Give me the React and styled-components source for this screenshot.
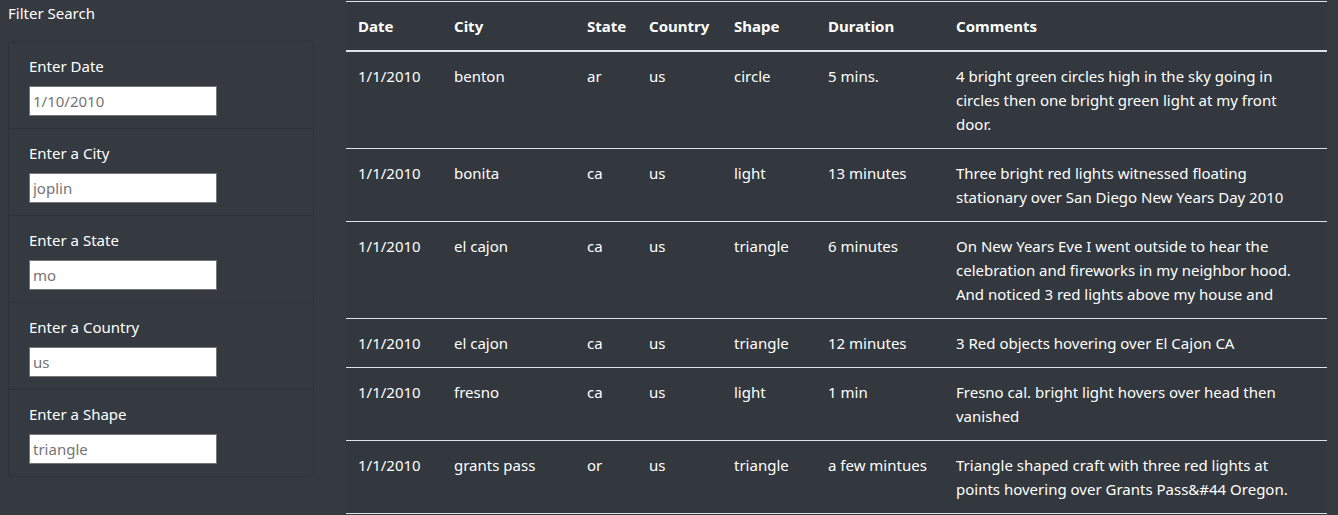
import React from 'react';
import styled, { createGlobalStyle } from 'styled-components';

const GlobalStyle = createGlobalStyle`
    body {
        margin: 0;
        background-color: #343a40;
        color: #fff;
        font-family: "Noto Sans", "Open Sans", sans-serif;
        font-size: 15px;
        line-height: 24px;
    }
`;

const filters = [
    { label: 'Enter Date', placeholder: '1/10/2010' },
    { label: 'Enter a City', placeholder: 'joplin' },
    { label: 'Enter a State', placeholder: 'mo' },
    { label: 'Enter a Country', placeholder: 'us' },
    { label: 'Enter a Shape', placeholder: 'triangle' },
];

const columns = [
    { title: 'Date', width: 96 },
    { title: 'City', width: 133 },
    { title: 'State', width: 62 },
    { title: 'Country', width: 85 },
    { title: 'Shape', width: 94 },
    { title: 'Duration', width: 128 },
    { title: 'Comments', width: 383 },
];

const sightings = [
    ['1/1/2010', 'benton', 'ar', 'us', 'circle', '5 mins.', '4 bright green circles high in the sky going in circles then one bright green light at my front door.'],
    ['1/1/2010', 'bonita', 'ca', 'us', 'light', '13 minutes', 'Three bright red lights witnessed floating stationary over San Diego New Years Day 2010'],
    ['1/1/2010', 'el cajon', 'ca', 'us', 'triangle', '6 minutes', 'On New Years Eve I went outside to hear the celebration and fireworks in my neighbor hood. And noticed 3 red lights above my house and'],
    ['1/1/2010', 'el cajon', 'ca', 'us', 'triangle', '12 minutes', '3 Red objects hovering over El Cajon CA'],
    ['1/1/2010', 'fresno', 'ca', 'us', 'light', '1 min', 'Fresno cal. bright light hovers over head then vanished'],
    ['1/1/2010', 'grants pass', 'or', 'us', 'triangle', 'a few mintues', 'Triangle shaped craft with three red lights at points hovering over Grants Pass&#44 Oregon.'],
];

class App extends React.Component {
    render() {
        return (
            <Page>
                <GlobalStyle />
                <Sidebar>
                    <SidebarTitle>Filter Search</SidebarTitle>
                    <FilterCard>
                        {filters.map((filter) => (
                            <FilterItem key={filter.label}>
                                <FilterLabel>{filter.label}</FilterLabel>
                                <FilterInput type="text" placeholder={filter.placeholder} />
                            </FilterItem>
                        ))}
                    </FilterCard>
                </Sidebar>
                <TableWrap>
                    <Table>
                        <colgroup>
                            {columns.map((col) => <col key={col.title} style={{ width: col.width }} />)}
                        </colgroup>
                        <thead>
                            <tr>
                                {columns.map((col) => <HeadCell key={col.title}>{col.title}</HeadCell>)}
                            </tr>
                        </thead>
                        <tbody>
                            {sightings.map((row, index) => (
                                <tr key={index}>
                                    {row.map((value, i) => <Cell key={i}>{value}</Cell>)}
                                </tr>
                            ))}
                        </tbody>
                    </Table>
                </TableWrap>
            </Page>
        );
    }
}

export default App;

const Page = styled.div`
    display: flex;
    align-items: flex-start;
    padding-top: 1px;
    min-height: 514px;
`;

const Sidebar = styled.div`
    width: 306px;
    margin-left: 8px;
    flex-shrink: 0;
`;

const SidebarTitle = styled.div`
    line-height: 24px;
    margin-bottom: 16px;
`;

const FilterCard = styled.ul`
    list-style: none;
    margin: 0;
    padding: 0;
    border: 1px solid rgba(0, 0, 0, 0.125);
    border-radius: 4px;
`;

const FilterItem = styled.li`
    display: flex;
    flex-direction: column;
    align-items: flex-start;
    padding: 12px 20px;
    border-bottom: 1px solid rgba(0, 0, 0, 0.125);

    &:last-child {
        border-bottom: none;
    }
`;

const FilterLabel = styled.label`
    line-height: 24px;
    margin-bottom: 8px;
`;

const FilterInput = styled.input`
    box-sizing: border-box;
    width: 188px;
    height: 30px;
    padding: 1px 3px;
    border: 1px solid #767676;
    border-radius: 0;
    background: #fff;
    font-family: "Noto Sans", "Open Sans", sans-serif;
    font-size: 15px;

    &::placeholder {
        color: #757575;
    }
`;

const TableWrap = styled.div`
    margin-left: 32px;
    width: 981px;
    flex-shrink: 0;
    background-color: #32383e;
`;

const Table = styled.table`
    width: 100%;
    table-layout: fixed;
    border-collapse: collapse;
    color: #fff;
`;

const HeadCell = styled.th`
    text-align: left;
    font-weight: 700;
    padding: 12px;
    line-height: 24px;
    border-top: 1px solid #dee2e6;
    border-bottom: 2px solid #dee2e6;
    vertical-align: bottom;
`;

const Cell = styled.td`
    padding: 12px;
    line-height: 24px;
    vertical-align: top;
    border-bottom: 1px solid #dee2e6;
`;
